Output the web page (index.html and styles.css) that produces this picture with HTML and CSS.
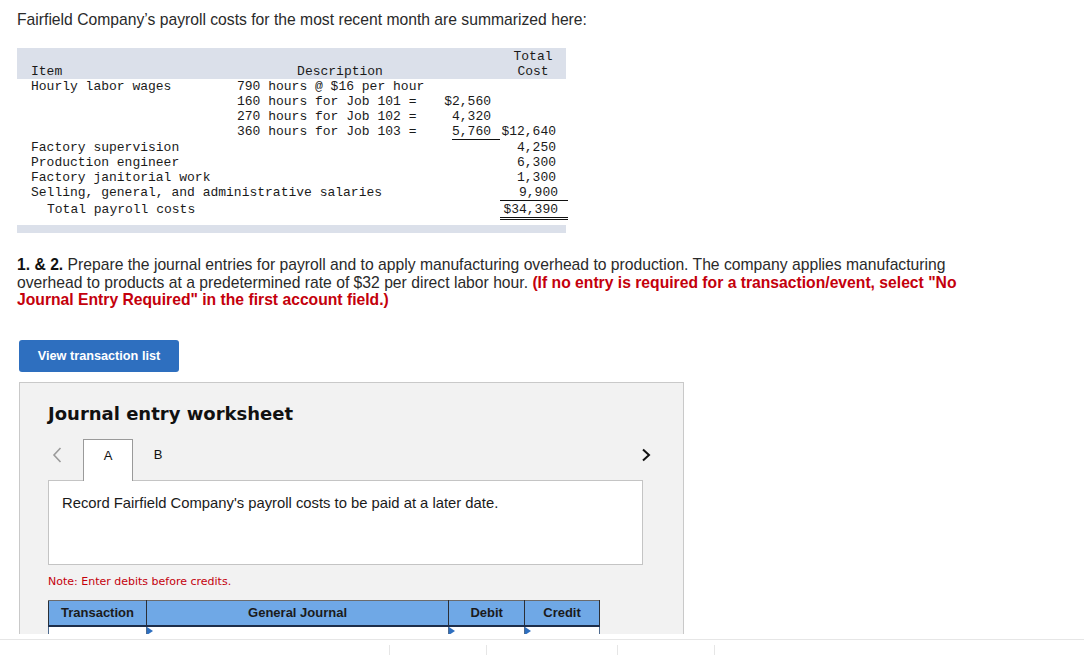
FILE: index.html
```html
<!DOCTYPE html>
<html lang="en">
<head>
<meta charset="utf-8">
<title>Payroll costs</title>
<link rel="stylesheet" href="styles.css">
</head>
<body>
<main class="page">
  <p class="intro">Fairfield Company’s payroll costs for the most recent month are summarized here:</p>

  <table class="costs">
    <colgroup>
      <col class="w-item">
      <col class="w-desc">
      <col class="w-amt">
      <col class="w-total">
    </colgroup>
    <thead>
      <tr class="head">
        <th class="c-item">Item</th>
        <th class="c-desc">Description</th>
        <th class="c-amt"></th>
        <th class="c-total">Total<br>Cost</th>
      </tr>
    </thead>
    <tbody>
      <tr><td class="c-item">Hourly labor wages</td><td class="c-desc">790 hours @ $16 per hour</td><td class="c-amt"></td><td class="c-total"></td></tr>
      <tr><td class="c-item"></td><td class="c-desc">160 hours for Job 101 =</td><td class="c-amt">$2,560</td><td class="c-total"></td></tr>
      <tr><td class="c-item"></td><td class="c-desc">270 hours for Job 102 =</td><td class="c-amt">4,320</td><td class="c-total"></td></tr>
      <tr class="sub"><td class="c-item"></td><td class="c-desc">360 hours for Job 103 =</td><td class="c-amt"><span class="rule">5,760</span></td><td class="c-total">$12,640</td></tr>
      <tr><td class="c-item">Factory supervision</td><td class="c-desc"></td><td class="c-amt"></td><td class="c-total">4,250</td></tr>
      <tr><td class="c-item">Production engineer</td><td class="c-desc"></td><td class="c-amt"></td><td class="c-total">6,300</td></tr>
      <tr><td class="c-item">Factory janitorial work</td><td class="c-desc"></td><td class="c-amt"></td><td class="c-total">1,300</td></tr>
      <tr class="last"><td class="c-item" colspan="2">Selling, general, and administrative salaries</td><td class="c-amt"></td><td class="c-total"><span class="single">9,900</span></td></tr>
      <tr class="grand"><td class="c-item indent" colspan="2">Total payroll costs</td><td class="c-amt"></td><td class="c-total"><span class="double">$34,390</span></td></tr>
    </tbody>
    <tfoot>
      <tr class="band"><td colspan="4"></td></tr>
    </tfoot>
  </table>

  <p class="question"><strong>1. &amp; 2.</strong> Prepare the journal entries for payroll and to apply manufacturing overhead to production. The company applies manufacturing overhead to products at a predetermined rate of $32 per direct labor hour. <strong class="warn">(If no entry is required for a transaction/event, select "No Journal Entry Required" in the first account field.)</strong></p>

  <button class="btn" type="button">View transaction list</button>

  <section class="worksheet">
    <h2 class="ws-title">Journal entry worksheet</h2>

    <div class="tabbar">
      <span class="arrow prev">
        <svg width="10" height="16" viewBox="0 0 10 16"><path d="M8.5 1 L2 8 L8.5 15" fill="none" stroke="#9b9b9b" stroke-width="1.6"/></svg>
      </span>
      <span class="tab active">A</span>
      <span class="tab">B</span>
      <span class="spacer"></span>
      <span class="arrow next">
        <svg width="10" height="14" viewBox="0 0 10 14"><path d="M2 1.5 L8 7 L2 12.5" fill="none" stroke="#111" stroke-width="2"/></svg>
      </span>
    </div>

    <div class="prompt">Record Fairfield Company's payroll costs to be paid at a later date.</div>

    <p class="note">Note: Enter debits before credits.</p>

    <table class="journal">
      <thead>
        <tr>
          <th class="j-tx">Transaction</th>
          <th class="j-acct">General Journal</th>
          <th class="j-dr">Debit</th>
          <th class="j-cr">Credit</th>
        </tr>
      </thead>
      <tbody>
        <tr>
          <td class="j-tx">1</td>
          <td class="j-acct"><span class="pick"></span></td>
          <td class="j-dr"><span class="pick"></span></td>
          <td class="j-cr"><span class="pick"></span></td>
        </tr>
        <tr>
          <td class="j-tx"></td>
          <td class="j-acct"><span class="pick"></span></td>
          <td class="j-dr"><span class="pick"></span></td>
          <td class="j-cr"><span class="pick"></span></td>
        </tr>
      </tbody>
    </table>
  </section>
</main>

<footer class="dock">
  <div class="dock-inner">
    <span class="dock-cell wide"></span>
    <span class="dock-cell c1"></span>
    <span class="dock-cell c2"></span>
    <span class="dock-cell c3"></span>
    <span class="dock-cell rest"></span>
  </div>
</footer>
</body>
</html>
```

FILE: styles.css
```css
html, body {
  margin: 0;
  padding: 0;
  background: #fff;
}

body {
  font-family: "Liberation Sans", Arial, sans-serif;
  color: #2a2a2a;
  overflow: hidden;
}

.page {
  padding: 11px 17px 40px;
}

.intro {
  margin: 0;
  font-size: 15.7px;
  line-height: 18px;
}

/* payroll summary table */
.costs {
  margin-top: 19px;
  width: 549px;
  table-layout: fixed;
  border-collapse: collapse;
  font-family: "Liberation Mono", "Courier New", monospace;
  font-size: 13px;
  line-height: 15px;
  color: #1a1a1a;
}

.w-item { width: 215px; }
.w-desc { width: 208px; }
.w-amt { width: 60px; }
.w-total { width: 66px; }

.costs th,
.costs td {
  padding: 0;
  font-weight: normal;
  white-space: nowrap;
  vertical-align: top;
  overflow: visible;
}

.costs .head th {
  background: #dbe0ea;
  height: 31px;
  vertical-align: bottom;
}

.c-item {
  padding-left: 14px !important;
  text-align: left;
}

.c-desc {
  padding-left: 5px !important;
  text-align: left;
}

.head .c-desc {
  text-align: center;
  padding-left: 8px !important;
}

.c-amt {
  padding-right: 9px !important;
  text-align: right;
}

.c-total {
  padding-right: 10px !important;
  text-align: right;
}

.head .c-total {
  text-align: center;
  padding-left: 0 !important;
  padding-right: 0 !important;
}

.costs td {
  height: 15px;
}

.sub td {
  height: 16px;
}

.rule {
  display: inline-block;
  width: 39px;
  margin-right: -9px;
  padding-right: 9px;
  border-bottom: 1px solid #111;
  text-align: right;
  vertical-align: top;
}

.last td {
  height: 16px;
}

.single,
.double {
  display: inline-block;
  width: 58px;
  margin-right: -10px;
  padding-right: 10px;
  text-align: right;
  vertical-align: top;
}

.single {
  border-bottom: 1px solid #111;
}

.grand td {
  height: 16px;
  padding-top: 1px;
}

.indent {
  padding-left: 30px !important;
}

.double {
  border-bottom: 3px double #111;
}

.band td {
  height: 8px;
  padding: 0;
  border-top: 5px solid #fff;
  background: #dbe0ea;
}

/* question text */
.question {
  margin: 23px 0 0;
  font-size: 15.7px;
  line-height: 17.5px;
  width: 965px;
}

.question strong {
  font-weight: bold;
  color: #111;
}

.question .warn {
  color: #c4000c;
}

.btn {
  display: block;
  margin: 31px 0 0 2px;
  width: 160px;
  height: 32px;
  border: 0;
  border-radius: 3px;
  background: #2e6fbf;
  color: #fff;
  font-family: "Liberation Sans", Arial, sans-serif;
  font-size: 12.7px;
  font-weight: bold;
  padding: 0;
}

/* journal entry worksheet */
.worksheet {
  margin: 10px 0 0 2px;
  width: 607px;
  padding: 18px 28px 40px 28px;
  background: #f2f2f2;
  border: 1px solid #c9c9c9;
}

.ws-title {
  margin: 0;
  font-family: "DejaVu Sans", Verdana, sans-serif;
  font-size: 18px;
  font-weight: bold;
  line-height: 26px;
  color: #111;
}

.tabbar {
  display: flex;
  align-items: stretch;
  margin-top: 12px;
  width: 605px;
  height: 41px;
}

.arrow {
  display: flex;
  align-items: center;
  justify-content: center;
  box-sizing: border-box;
  padding-bottom: 9px;
}

.prev {
  width: 35px;
  justify-content: flex-start;
  padding-left: 4px;
}

.next {
  width: 14px;
}

.spacer {
  flex: 1;
}

.tab {
  width: 50px;
  display: flex;
  align-items: center;
  justify-content: center;
  font-size: 13px;
  color: #111;
  box-sizing: border-box;
  padding-bottom: 9px;
}

.tab.active {
  background: #fff;
  border: 1px solid #9a9a9a;
  border-bottom: 0;
  margin-bottom: -1px;
  position: relative;
  z-index: 1;
}

.prompt {
  width: 595px;
  height: 85px;
  box-sizing: border-box;
  background: #fff;
  border: 1px solid #c4c4c4;
  padding: 14px 13px;
  font-size: 14.8px;
  line-height: 17px;
  color: #1a1a1a;
}

.note {
  margin: 10px 0 0;
  font-family: "DejaVu Sans", Verdana, sans-serif;
  font-size: 11px;
  line-height: 14px;
  color: #c4000c;
}

.journal {
  margin-top: 11px;
  width: 552px;
  border-collapse: collapse;
  font-family: "Liberation Sans", Arial, sans-serif;
  font-size: 13px;
}

.journal th {
  height: 24px;
  padding: 0;
  background: #6fa8e6;
  color: #1b1b1b;
  font-weight: bold;
  border: 1px solid #2b2f36;
  border-top-color: #6b6b6b;
  border-bottom: 2px solid #1d2e4a;
}

.j-tx { width: 97px; }
.j-acct { width: 302px; }
.j-dr { width: 75px; }
.j-cr { width: 74px; }

.journal td {
  position: relative;
  height: 30px;
  padding: 0;
  background: #fff;
  border-left: 1px solid #4f6b8f;
  border-right: 1px solid #4f6b8f;
  border-bottom: 1px solid #c4c4c4;
  text-align: center;
  font-size: 13px;
  color: #111;
}

.pick {
  position: absolute;
  left: 0;
  top: 0;
  width: 0;
  height: 0;
  border-top: 4px solid transparent;
  border-bottom: 4px solid transparent;
  border-left: 6px solid #2e6fbf;
}

/* bottom dock */
.dock {
  position: fixed;
  left: 0;
  right: 0;
  bottom: 0;
  height: 21px;
  background: #fff;
  padding-top: 5px;
  box-sizing: border-box;
}

.dock-inner {
  display: flex;
  height: 16px;
  border-top: 1px solid #e6e6e6;
  padding-top: 5px;
  box-sizing: border-box;
}

.dock-cell {
  height: 11px;
}

.dock-cell.wide { width: 389px; }
.dock-cell.c1 { width: 96px; border-left: 1px solid #e6e6e6; }
.dock-cell.c2 { width: 130px; border-left: 1px solid #e6e6e6; }
.dock-cell.c3 { width: 96px; border-left: 1px solid #e6e6e6; }
.dock-cell.rest { flex: 1; border-left: 1px solid #e6e6e6; }
```
